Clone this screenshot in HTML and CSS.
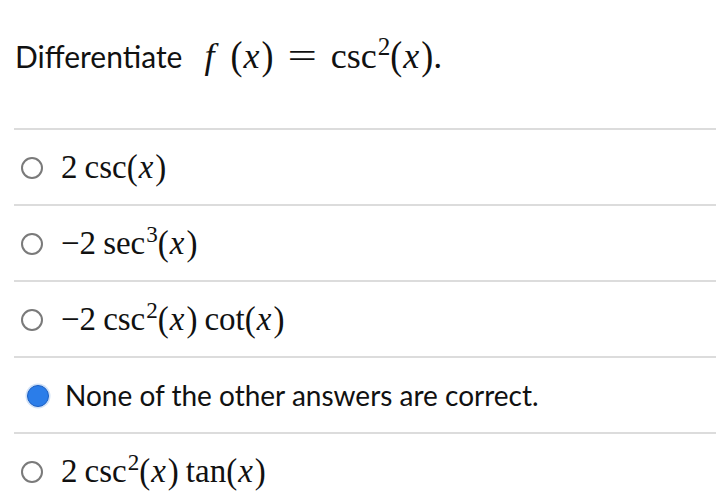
FILE: index.html
```html
<!DOCTYPE html>
<html>
<head>
<meta charset="utf-8">
<link rel="stylesheet" href="styles.css">
</head>
<body>
<div class="page">
  <div class="question">
    <span class="prompt">Differentiate</span>
    <span class="math q"><i class="fv">f</i><span class="p">(</span><i>x</i><span class="p">)</span><span class="eq">=</span>csc<sup>2</sup><span class="p">(</span><i>x</i><span class="p">)</span>.</span>
  </div>
  <div class="options">
    <div class="option">
      <span class="radio"></span>
      <span class="math">2<span class="sp"></span>csc<span class="p">(</span><i>x</i><span class="p">)</span></span>
    </div>
    <div class="option">
      <span class="radio"></span>
      <span class="math">&minus;2<span class="sp"></span>sec<sup>3</sup><span class="p">(</span><i>x</i><span class="p">)</span></span>
    </div>
    <div class="option">
      <span class="radio"></span>
      <span class="math">&minus;2<span class="sp"></span>csc<sup>2</sup><span class="p">(</span><i>x</i><span class="p">)</span><span class="sp"></span>cot<span class="p">(</span><i>x</i><span class="p">)</span></span>
    </div>
    <div class="option">
      <span class="radio checked"></span>
      <span class="text">None of the other answers are correct.</span>
    </div>
    <div class="option">
      <span class="radio"></span>
      <span class="math">2<span class="sp"></span>csc<sup>2</sup><span class="p">(</span><i>x</i><span class="p">)</span><span class="sp"></span>tan<span class="p">(</span><i>x</i><span class="p">)</span></span>
    </div>
  </div>
</div>
</body>
</html>
```
FILE: styles.css
```css
html, body {
  margin: 0;
  padding: 0;
  background: #fff;
}
.page {
  width: 716px;
  height: 502px;
  overflow: hidden;
  color: #111;
}
.question {
  height: 128px;
  display: flex;
  align-items: center;
  padding-left: 15px;
  padding-bottom: 16px;
  box-sizing: border-box;
  gap: 21px;
}
.prompt {
  font-family: Lato, "Liberation Sans", sans-serif;
  font-size: 30px;
}
.math {
  font-family: "Liberation Serif", "Times New Roman", serif;
  font-size: 33px;
  white-space: nowrap;
  display: inline-flex;
  align-items: baseline;
}
.math.q {
  font-size: 36px;
}
.math i {
  font-style: italic;
  padding: 0 2px 0 1px;
}
.math .fv {
  margin-right: 14px;
}
.math .p {
  display: inline-block;
  transform: scaleY(1.1);
}
.math sup {
  font-size: 0.7em;
  line-height: 0;
  position: relative;
  top: -0.5em;
  padding-left: 1px;
}
.sp {
  display: inline-block;
  width: 7px;
}
.eq {
  display: inline-block;
  transform: scaleX(1.45);
  margin: 0 18px 0 19px;
}
.options {
  margin-left: 14px;
}
.option {
  height: 76px;
  border-top: 2px solid #dcdcdc;
  box-sizing: border-box;
  display: flex;
  align-items: center;
  padding-left: 7px;
}
.radio {
  flex: none;
  display: block;
  box-sizing: border-box;
  width: 22px;
  height: 22px;
  border: 2px solid #7a7a7a;
  border-radius: 50%;
  background: #fff;
  margin-right: 18px;
  margin-top: 2px;
}
.radio.checked {
  width: 22px;
  height: 22px;
  margin-left: 6px;
  margin-right: 16px;
  border: 1.5px solid #1c5fc2;
  background: #2b7de9;
  box-shadow: 0 0 0 1.5px #d0e1f7;
}
.text {
  font-family: Lato, "Liberation Sans", sans-serif;
  font-size: 28px;
}
```
